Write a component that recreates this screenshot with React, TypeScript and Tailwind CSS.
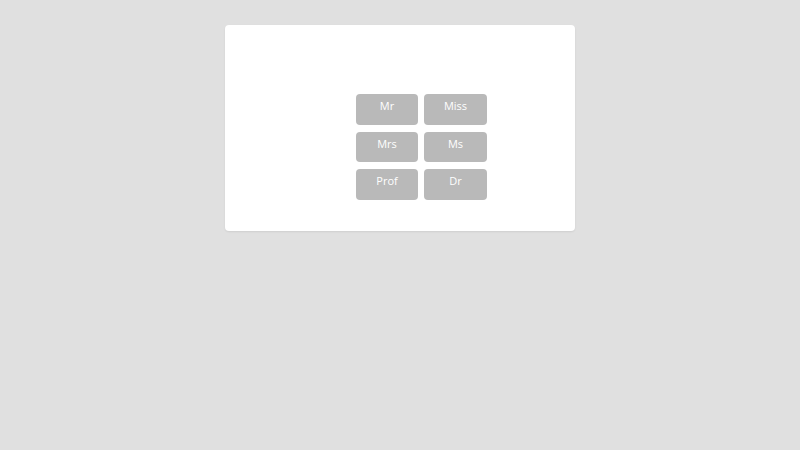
const titles = ["Mr", "Miss", "Mrs", "Ms", "Prof", "Dr"];

export default function App() {
  return (
    <div className="min-h-[450px] w-full bg-[#e0e0e0] pt-[25px] font-['Open_Sans',sans-serif]">
      <div className="mx-auto h-[206px] w-[350px] rounded-[4px] bg-white pl-[131px] pt-[69px] shadow-[0_1px_2px_rgba(0,0,0,0.08)]">
        <div className="grid w-[131px] grid-cols-[62px_63px] gap-x-[6px] gap-y-[7px]">
          {titles.map((t) => (
            <button
              key={t}
              type="button"
              className="flex h-[30.5px] items-start justify-center rounded-[4px] bg-[#b9b9b9] pt-[5px] text-[11px] leading-[14px] text-white"
            >
              {t}
            </button>
          ))}
        </div>
      </div>
    </div>
  );
}
